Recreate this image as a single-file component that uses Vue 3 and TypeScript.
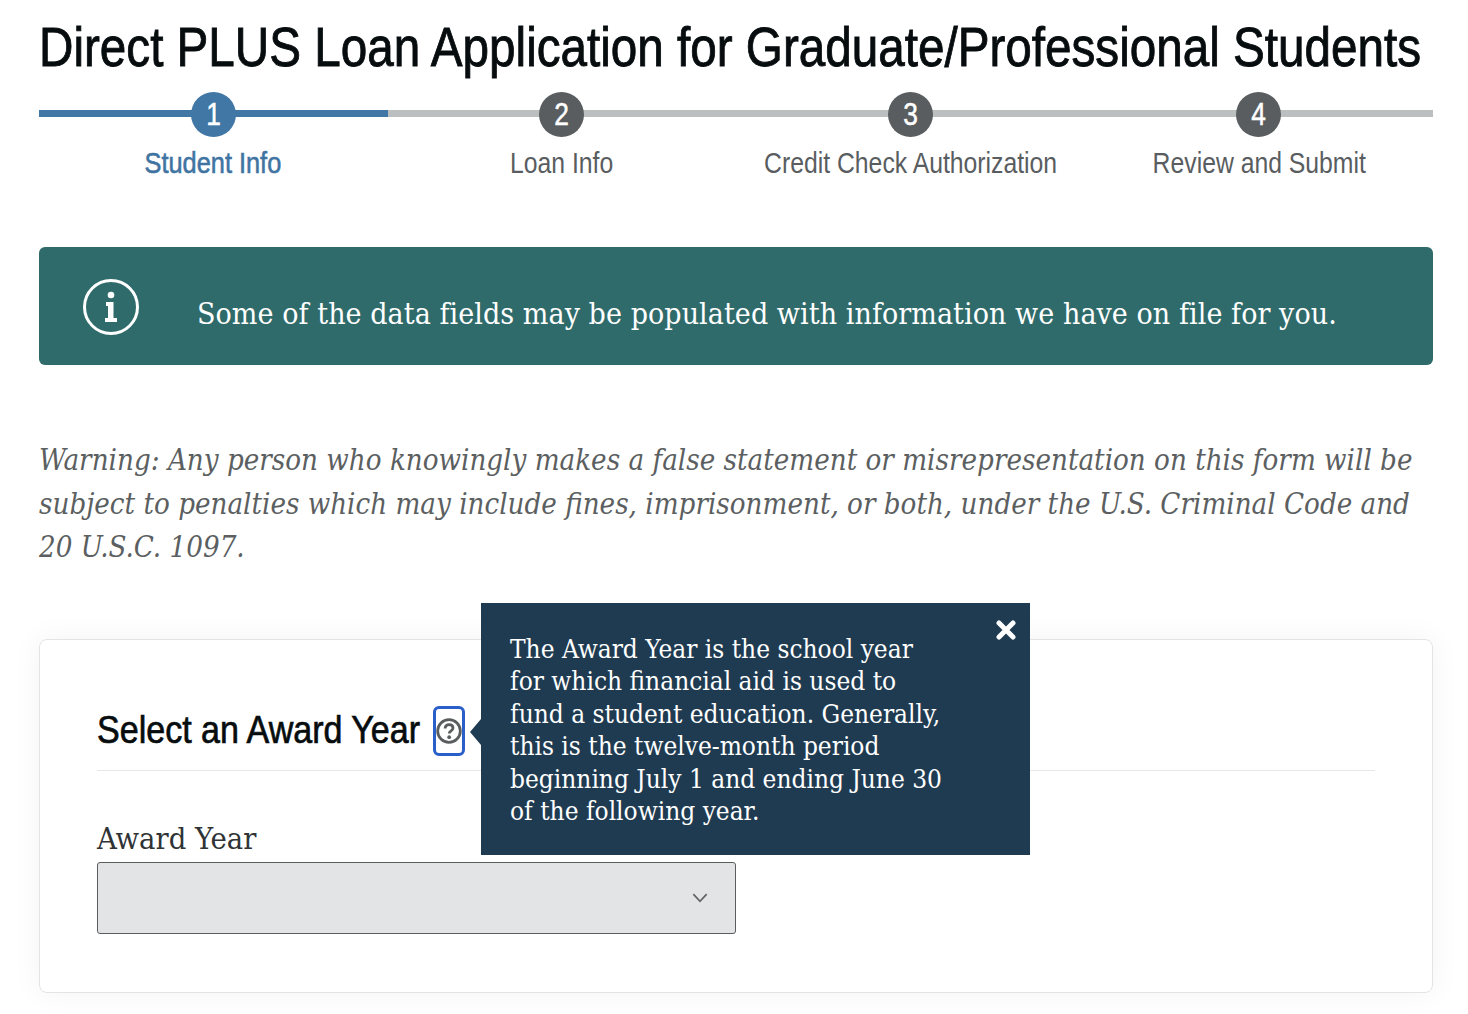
<script setup lang="ts">
interface Step {
  num: number;
  label: string;
  active?: boolean;
}

const steps: Step[] = [
  { num: 1, label: "Student Info", active: true },
  { num: 2, label: "Loan Info" },
  { num: 3, label: "Credit Check Authorization" },
  { num: 4, label: "Review and Submit" },
];
</script>

<template>
  <main class="page">
    <h1 class="title"><span>Direct PLUS Loan Application for Graduate/Professional Students</span></h1>

    <ol class="stepper">
      <li v-for="step in steps" :key="step.num" class="step" :class="{ active: step.active }">
        <span class="bullet"><span>{{ step.num }}</span></span>
        <span class="step-label">{{ step.label }}</span>
      </li>
    </ol>

    <div class="banner">
      <svg class="banner-icon" viewBox="0 0 56 56" width="56" height="56" aria-hidden="true">
        <circle cx="28" cy="28" r="26.5" fill="none" stroke="#fff" stroke-width="3" />
        <circle cx="28" cy="16" r="3.3" fill="#fff" />
        <path d="M23 23h7.500v16h3.500v4H22v-4h3v-12h-2z" fill="#fff" />
      </svg>
      <p class="banner-text">Some of the data fields may be populated with information we have on file for you.</p>
    </div>

    <p class="warning">
      Warning: Any person who knowingly makes a false statement or misrepresentation on this form will be
      subject to penalties which may include fines, imprisonment, or both, under the U.S. Criminal Code and
      20 U.S.C. 1097.
    </p>

    <section class="card">
      <div class="card-head">
        <h2 class="card-title"><span>Select an Award Year</span></h2>
        <button class="help" type="button" aria-label="Help">
          <svg viewBox="0 0 28 28" width="28" height="28" aria-hidden="true">
            <circle cx="14" cy="14" r="12.200" fill="none" stroke="#5a5d5e" stroke-width="3" />
            <path d="M9.800 11.200c0-2.500 1.900-4.100 4.300-4.100s4.200 1.400 4.200 3.600c0 1.800-1.100 2.700-2.300 3.500-1.100.7-1.700 1.200-1.700 2.600" fill="none" stroke="#5a5d5e" stroke-width="3" />
            <circle cx="14.200" cy="20.600" r="2" fill="#5a5d5e" />
          </svg>
        </button>

        <div class="tooltip">
          <span class="tooltip-arrow"></span>
          <svg class="tooltip-close" viewBox="0 0 20 20" width="20" height="20" aria-hidden="true">
            <path d="M3 3l14 14M17 3L3 17" stroke="#fff" stroke-width="5" stroke-linecap="round" />
          </svg>
          <p class="tooltip-text">The Award Year is the school year for which financial aid is used to fund a student education. Generally, this is the twelve-month period beginning July 1 and ending June 30 of the following year.</p>
        </div>
      </div>

      <label class="field-label">Award Year</label>
      <div class="select">
        <svg viewBox="0 0 14 9" width="16" height="10" aria-hidden="true">
          <path d="M1 1l6 6.500L13 1" fill="none" stroke="#5f6364" stroke-width="1.500" />
        </svg>
      </div>
    </section>
  </main>
</template>

<style>
html,
body {
  background: #fff;
}
</style>

<style scoped>
.page {
  box-sizing: border-box;
  width: 1468px;
  height: 1014px;
  padding: 14px 35px 0 39px;
  overflow: hidden;
  font-family: "DejaVu Serif Condensed", "DejaVu Serif", serif;
}

/* no condensed sans is installed, so the heading faces are squeezed */
.title {
  margin: 0;
  width: 1382px;
  font-family: "Liberation Sans", sans-serif;
  font-size: 56px;
  line-height: 66px;
  font-weight: 400;
  color: #070c0e;
  white-space: nowrap;
}

.title span {
  display: inline-block;
  transform: scaleX(0.8505);
  transform-origin: left center;
  -webkit-text-stroke: 0.9px #070c0e;
}

.stepper {
  display: grid;
  grid-template-columns: repeat(4, minmax(0, 1fr));
  margin: 12px 0 0;
  padding: 0;
  list-style: none;
}

.step {
  position: relative;
  display: flex;
  flex-direction: column;
  align-items: center;
  gap: 8px;
}

.step::before {
  content: "";
  position: absolute;
  left: 0;
  right: 0;
  top: 18px;
  height: 7px;
  background: #bbbfbf;
}

.step.active::before {
  background: #4077a5;
}

.bullet {
  position: relative;
  display: flex;
  align-items: center;
  justify-content: center;
  width: 45px;
  height: 45px;
  border-radius: 50%;
  background: #595d5f;
  color: #fff;
  font-family: "Liberation Sans", sans-serif;
  font-size: 31px;
}

.bullet span {
  display: inline-block;
  transform: scaleX(0.85);
  -webkit-text-stroke: 0.5px #fff;
}

.active .bullet {
  background: #4077a5;
}

.step-label {
  font-family: "Liberation Sans", sans-serif;
  font-size: 30px;
  line-height: 36px;
  color: #595d5f;
  white-space: nowrap;
  transform: scaleX(0.825);
}

.active .step-label {
  color: #3f74a2;
  transform: scaleX(0.845);
  -webkit-text-stroke: 0.6px #3f74a2;
}

.banner {
  display: flex;
  align-items: center;
  height: 118px;
  margin-top: 66px;
  padding-left: 44px;
  box-sizing: border-box;
  background: #306b6b;
  border-radius: 6px;
  color: #fff;
}

.banner-icon {
  flex: none;
  margin-top: 2px;
}

.banner-text {
  margin: 16px 0 0 58px;
  font-size: 30px;
  line-height: 40px;
  letter-spacing: 0.07px;
  white-space: nowrap;
}

.warning {
  margin: 74px 0 0;
  font-size: 29.200px;
  font-style: italic;
  line-height: 43.500px;
  color: #5c5f61;
}

.card {
  box-sizing: border-box;
  height: 354px;
  margin-top: 69px;
  padding: 0 57px;
  background: #fff;
  border: 1px solid #e3e4e5;
  border-radius: 8px;
  box-shadow: 0 0 30px rgba(0, 0, 0, 0.05);
}

.card-head {
  position: relative;
  display: flex;
  align-items: center;
  height: 131px;
  padding-top: 50px;
  box-sizing: border-box;
  border-bottom: 1px solid #e6e7e8;
}

.card-title {
  flex: none;
  width: 323px;
  margin: 0;
  font-family: "Liberation Sans", sans-serif;
  font-size: 39px;
  font-weight: 400;
  line-height: 46px;
  color: #070c0e;
  white-space: nowrap;
}

.card-title span {
  display: inline-block;
  transform: scaleX(0.873);
  transform-origin: left center;
  -webkit-text-stroke: 0.7px #070c0e;
}

.help {
  display: flex;
  align-items: center;
  justify-content: center;
  box-sizing: border-box;
  width: 32px;
  height: 50px;
  margin: 3px 0 0 13px;
  padding: 0;
  background: none;
  border: 3px solid #2a5fc9;
  border-radius: 6px;
}

.tooltip {
  position: absolute;
  left: 384px;
  top: -37px;
  box-sizing: border-box;
  width: 549px;
  height: 252px;
  padding: 30px 28px 0 29px;
  background: #1f3b51;
  color: #fff;
}

.tooltip-arrow {
  position: absolute;
  left: -11px;
  top: 116px;
  border-style: solid;
  border-width: 13px 11px 13px 0;
  border-color: transparent #1f3b51 transparent transparent;
}

.tooltip-close {
  position: absolute;
  top: 17px;
  right: 14px;
}

.tooltip-text {
  margin: 0;
  max-width: 438px;
  font-size: 26px;
  line-height: 32.500px;
}

.field-label {
  display: block;
  margin-top: 50px;
  font-size: 30.600px;
  line-height: 36px;
  color: #2f3335;
}

.select {
  display: flex;
  align-items: center;
  justify-content: flex-end;
  box-sizing: border-box;
  width: 639px;
  height: 72px;
  margin-top: 5px;
  padding-right: 27px;
  background: #e3e4e6;
  border: 1px solid #5a5d5e;
  border-radius: 3px;
}
</style>
